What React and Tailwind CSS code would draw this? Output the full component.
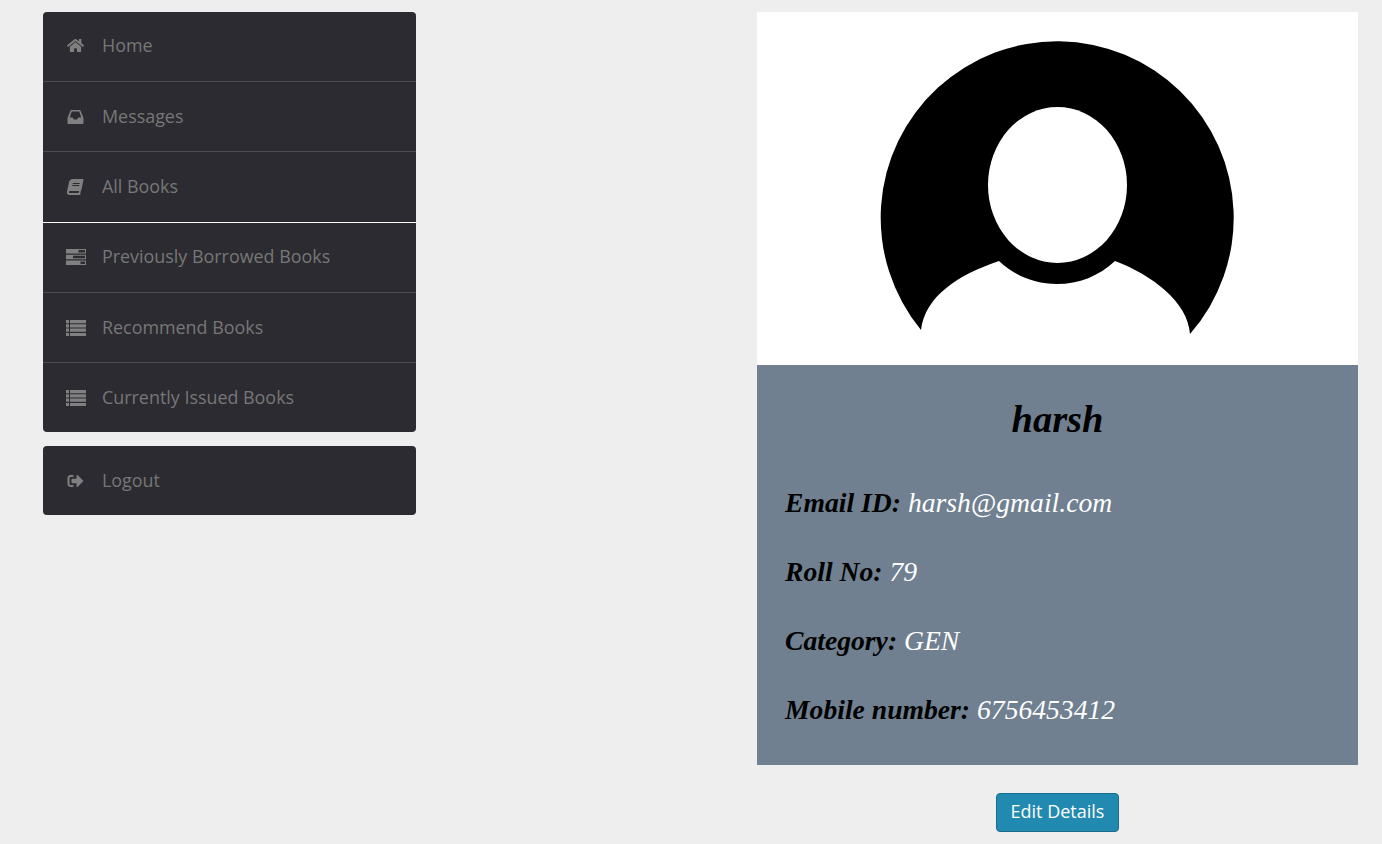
import React from 'react';
import { FaHome, FaBook, FaSignOutAlt } from 'react-icons/fa';

const InboxIcon = ({ className }) => (
  <svg viewBox="0 0 16 14" className={className} fill="currentColor" fillRule="evenodd">
    <path d="M3 0.5 Q3.2 0 4 0 H12 Q12.8 0 13 0.5 L16 8 V13 Q16 14 15 14 H1 Q0 14 0 13 V8 Z M4.2 1.6 L2.3 7.4 H5.3 L6.3 9.4 H9.7 L10.7 7.4 H13.7 L11.8 1.6 Z" />
  </svg>
);

const TasksIcon = ({ className }) => (
  <svg viewBox="0 0 20 16" className={className} fill="currentColor">
    <path d="M0 0 H20 V4.5 H0 Z M12.5 1 V3.5 H19 V1 Z" fillRule="evenodd" />
    <path d="M0 5.7 H20 V10.2 H0 Z M7 6.7 V9.2 H19 V6.7 Z" fillRule="evenodd" />
    <path d="M0 11.4 H20 V15.9 H0 Z M14.5 12.4 V14.9 H19 V12.4 Z" fillRule="evenodd" />
  </svg>
);

const ListIcon = ({ className }) => (
  <svg viewBox="0 0 20 16" className={className} fill="currentColor">
    <path d="M0 0 H3 V3.2 H0 Z M4 0 H20 V3.2 H4 Z" />
    <path d="M0 4.3 H3 V7.5 H0 Z M4 4.3 H20 V7.5 H4 Z" />
    <path d="M0 8.6 H3 V11.8 H0 Z M4 8.6 H20 V11.8 H4 Z" />
    <path d="M0 12.9 H3 V16 H0 Z M4 12.9 H20 V16 H4 Z" />
  </svg>
);

const menu = [
  { label: 'Home', icon: FaHome, iconClass: 'ml-px h-[15px] w-[17px]', rowClass: 'h-[70px] pb-0.5 border-b border-[#4c4c52]' },
  { label: 'Messages', icon: InboxIcon, iconClass: 'ml-px h-[14px] w-[17px]', rowClass: 'h-[70px] border-b border-[#4c4c52]' },
  { label: 'All Books', icon: FaBook, iconClass: 'ml-px h-[16px] w-[16px] -skew-x-12', rowClass: 'h-[71px] pb-px border-b border-white' },
  { label: 'Previously Borrowed Books', icon: TasksIcon, iconClass: 'h-[16px] w-[20px]', rowClass: 'h-[70px] pb-0.5 border-b border-[#4c4c52]' },
  { label: 'Recommend Books', icon: ListIcon, iconClass: 'h-[16px] w-[20px]', rowClass: 'h-[70px] border-b border-[#4c4c52]' },
  { label: 'Currently Issued Books', icon: ListIcon, iconClass: 'h-[16px] w-[20px]', rowClass: 'h-[69px]' },
];

const MenuRow = ({ item }) => {
  const Icon = item.icon;
  return (
    <a href="#" className={`flex items-center text-[17.9px] text-[#777777] ${item.rowClass}`}>
      <span className="flex w-[59px] shrink-0 pl-[23px] text-[#808080]">
        <Icon className={item.iconClass} />
      </span>
      {item.label}
    </a>
  );
};

const Avatar = () => (
  <svg viewBox="0 0 601 353" className="block h-[353px] w-full bg-white">
    <path
      d="M164 318 A176.5 176.5 0 1 1 433 322 C431 290 395 263 358 249 C342 264 322 272 300 272 C278 272 258 264 242 249 C200 263 168 285 164 318 Z"
      fill="#000"
    />
    <ellipse cx="300.5" cy="173" rx="69.5" ry="78" fill="#fff" />
  </svg>
);

const Field = ({ label, value }) => (
  <p className="mb-[35px] h-[34px] text-[27.65px] leading-[34px] font-bold text-black">
    {label}: <span className="font-normal text-white">{value}</span>
  </p>
);

export default function App() {
  return (
    <div className="flex min-h-[844px] items-start justify-between bg-[#eeeeee] pt-3 pr-6 pb-3 pl-[43px] font-['Open_Sans',sans-serif]">
      {/* Sidebar */}
      <div className="w-[373px]">
        <nav className="overflow-hidden rounded bg-[#2c2b31]">
          {menu.map((item) => (
            <MenuRow key={item.label} item={item} />
          ))}
        </nav>
        <a
          href="#"
          className="mt-[14px] flex h-[69px] items-center rounded bg-[#2c2b31] text-[17.9px] text-[#777777]"
        >
          <span className="flex w-[59px] shrink-0 pl-6 text-[#808080]">
            <FaSignOutAlt className="h-[16px] w-[17px]" />
          </span>
          Logout
        </a>
      </div>

      {/* Profile */}
      <div className="w-[601px]">
        <Avatar />
        <div className="h-[400px] bg-[#708090] px-7 pt-[31px] font-['Liberation_Serif',serif] italic">
          <h2 className="mb-[44px] h-[46px] text-center text-[38.4px] leading-[46px] font-bold text-black">harsh</h2>
          <Field label="Email ID" value="harsh@gmail.com" />
          <Field label="Roll No" value="79" />
          <Field label="Category" value="GEN" />
          <Field label="Mobile number" value="6756453412" />
        </div>
        <div className="mt-7 flex justify-center">
          <button className="h-[39px] w-[123px] rounded border border-[#1b6d8f] bg-[#2289b0] pb-0.5 text-[18px] text-white">
            Edit Details
          </button>
        </div>
      </div>
    </div>
  );
}
